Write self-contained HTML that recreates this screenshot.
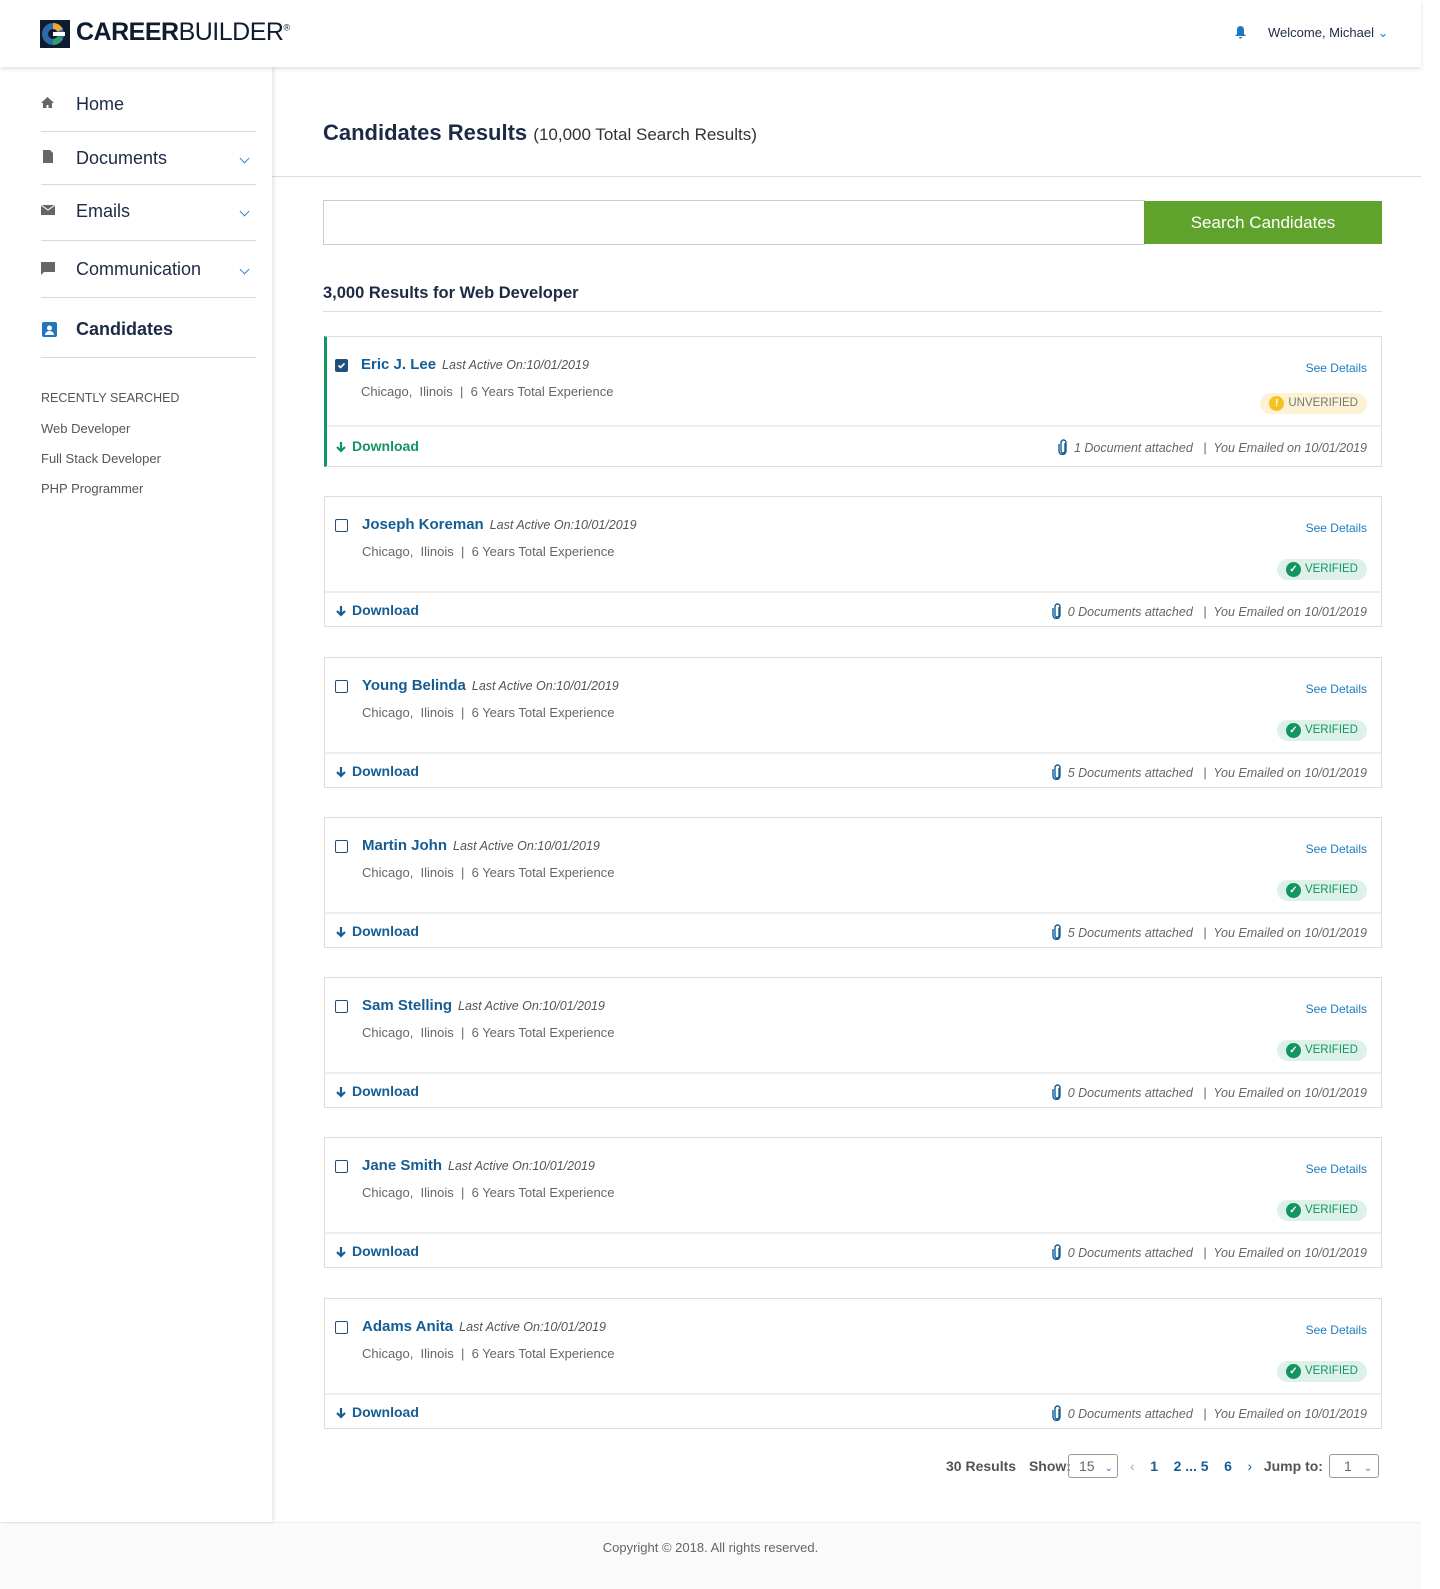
<!DOCTYPE html>
<html><head><meta charset="utf-8"><style>
*{box-sizing:border-box;margin:0;padding:0}
body{width:1440px;height:1589px;background:#fff;font-family:"Liberation Sans",sans-serif;color:#1d2a44;position:relative;overflow:hidden}
.hdr{position:absolute;left:0;top:0;width:1421px;height:67px;background:#fff;box-shadow:0 2px 4px rgba(0,0,0,.12);z-index:3}
.side{position:absolute;left:0;top:67px;width:272px;height:1455px;background:#fff;box-shadow:2px 0 4px rgba(0,0,0,.1);z-index:2}
.foot{position:absolute;left:0;top:1522px;width:1421px;height:67px;background:#fafafa;border-top:1px solid #eee;text-align:center;font-size:13px;color:#666;line-height:50px}
.nav{position:absolute;left:41px;width:215px;border-bottom:1px solid #d8d8d8;font-size:18px}
.nav span{position:absolute;left:35px}
.chev{position:absolute;right:8px;width:7px;height:7px;border-right:1.5px solid #3a86c8;border-bottom:1.5px solid #3a86c8;transform:rotate(45deg)}
.rs{position:absolute;left:41px;font-size:13px;color:#555}
.card{position:absolute;left:324px;width:1058px;height:131px;border:1px solid #ddd;background:#fff}
.card .bot{position:absolute;left:0;right:0;bottom:0;height:35px;border-top:2px solid #eee}
.cb{position:absolute;left:10px;top:22px;width:13px;height:13px;border:1.5px solid #1e4f7e;border-radius:2px}
.name{position:absolute;left:37px;top:19px;font-size:15px;font-weight:bold;color:#155d93}
.name i{font-weight:normal;font-size:12.5px;color:#555;margin-left:6px}
.loc{position:absolute;left:37px;top:47px;font-size:13px;color:#666}
.sd{position:absolute;right:14px;top:24px;font-size:12px;color:#1b7cc1}
.badge{position:absolute;right:14px;height:21px;border-radius:11px;font-size:11.5px;line-height:21px;padding:0 9px 0 28px}
.badge b{position:absolute;left:9px;top:3px;width:15px;height:15px;border-radius:50%;color:#fff;font-size:10px;line-height:15px;text-align:center}
.v{background:#ddf1ea;color:#13955f}.v b{background:#13955f}
.u{background:#fdf2d4;color:#777}.u b{background:#f3c321}
.dl{position:absolute;left:10px;top:9px;font-size:14px;color:#155d93;font-weight:bold}
.dl svg{vertical-align:-2px;margin-right:5px}
.meta{position:absolute;right:14px;top:10px;font-size:12.5px;color:#666;font-style:italic}
.meta svg{vertical-align:-3px;margin-right:6px}
</style></head><body>
<div class="hdr">
<svg style="position:absolute;left:40px;top:20px" width="30" height="28" viewBox="0 0 30 28"><rect x="0" y="0" width="30" height="28" fill="#0f1c30"/><circle cx="13" cy="14" r="11" fill="#2d6ba6"/><path d="M13 14 L13 3 A11 11 0 0 1 23 9Z" fill="#f0a43a"/><path d="M13 14 L23 19 A11 11 0 0 1 13 25Z" fill="#2ea06a"/><circle cx="13" cy="14" r="5" fill="#0f1c30"/><rect x="13" y="12" width="12" height="4" fill="#fff"/></svg>
<div style="position:absolute;left:76px;top:18px;font-size:25px;letter-spacing:-0.5px;color:#0f1c30"><b>CAREER</b><span style="font-weight:normal">BUILDER</span><sup style="font-size:9px">®</sup></div>
<svg style="position:absolute;left:1234px;top:25px" width="13" height="14" viewBox="0 0 13 14"><path d="M6.5 1C4 1 3 3 3 5v4L1 11h11l-2-2V5c0-2-1-4-3.5-4zM5 12h3a1.5 1.5 0 0 1-3 0z" fill="#2176c0"/></svg>
<div style="position:absolute;left:1268px;top:25px;font-size:13px;color:#1d2a44">Welcome, Michael <span style="color:#3a86c8">⌄</span></div>
</div>
<div class="side">
<div class="nav" style="top:0;height:65px;border-bottom:1px solid #d8d8d8"><svg style="position:absolute;left:0;top:30px" width="13" height="11"><path d="M6.5 0L0 6h2v5h3.5V8h2v3H11V6h2z" fill="#666"/></svg><span style="top:27px">Home</span></div>
<div class="nav" style="top:65px;height:53px"><svg style="position:absolute;left:2px;top:18px" width="10" height="13"><path d="M0 0h7l3 3v10H0z" fill="#666"/></svg><span style="top:16px">Documents</span><i class="chev" style="top:23px"></i></div>
<div class="nav" style="top:118px;height:56px"><svg style="position:absolute;left:0;top:20px" width="14" height="10"><rect width="14" height="10" fill="#666"/><path d="M0 0l7 5 7-5" stroke="#fff" fill="none"/></svg><span style="top:16px">Emails</span><i class="chev" style="top:23px"></i></div>
<div class="nav" style="top:174px;height:57px"><svg style="position:absolute;left:0;top:21px" width="14" height="13"><path d="M0 0h14v10H3l-3 3z" fill="#666"/></svg><span style="top:18px">Communication</span><i class="chev" style="top:25px"></i></div>
<div class="nav" style="top:231px;height:60px;font-weight:bold"><svg style="position:absolute;left:1px;top:23px" width="15" height="16"><rect y="1" width="15" height="15" rx="2" fill="#2176c0"/><circle cx="7.5" cy="7" r="2.5" fill="#fff"/><path d="M3 14a4.5 4 0 0 1 9 0z" fill="#fff"/></svg><span style="top:21px">Candidates</span></div>
<div class="rs" style="top:324px;font-size:12.5px">RECENTLY SEARCHED</div>
<div class="rs" style="top:354px">Web Developer</div>
<div class="rs" style="top:384px">Full Stack Developer</div>
<div class="rs" style="top:414px">PHP Programmer</div>
</div>
<div style="position:absolute;left:323px;top:120px;font-size:22px;font-weight:bold;color:#1d2a44">Candidates Results <span style="font-weight:normal;font-size:17px;color:#333">(10,000 Total Search Results)</span></div>
<div style="position:absolute;left:272px;top:176px;width:1149px;border-top:1px solid #ddd"></div>
<div style="position:absolute;left:323px;top:200px;width:822px;height:45px;border:1px solid #ccc"></div>
<div style="position:absolute;left:1144px;top:201px;width:238px;height:43px;background:#5fa32c;color:#fff;font-size:17px;text-align:center;line-height:43px">Search Candidates</div>
<div style="position:absolute;left:323px;top:284px;font-size:16.5px;font-weight:bold;color:#1d2a44">3,000 Results for Web Developer</div>
<div style="position:absolute;left:323px;top:311px;width:1059px;border-top:1px solid #ddd"></div>

<svg width="0" height="0" style="position:absolute"><defs>
<symbol id="ar" viewBox="0 0 12 12"><path d="M6 1v9M2 6l4 4 4-4" stroke="currentColor" stroke-width="2.2" fill="none"/></symbol>
<symbol id="pc" viewBox="0 0 10 16"><path d="M7 4v8a2 2 0 0 1-4 0V3.5a2.5 2.5 0 0 1 5 0V12a3.5 3.5 0 0 1-7 0V5" stroke="#155d93" stroke-width="1.4" fill="none"/></symbol>
</defs></svg>

<div class="card" style="top:336px;border-left:3px solid #13955f"><i class="cb" style="background:#1e4f7e;left:8px;"><svg style="position:absolute;left:1px;top:1px" width="9" height="9" viewBox="0 0 9 9"><path d="M1.5 4.5l2 2 4-4" stroke="#fff" stroke-width="1.6" fill="none"/></svg></i><div class="name" style="left:34px">Eric J. Lee<i>Last Active On:10/01/2019</i></div><div class="loc" style="left:34px">Chicago,&nbsp; Ilinois &nbsp;|&nbsp; 6 Years Total Experience</div><div class="sd">See Details</div><div class="badge u" style="top:56px"><b>!</b>UNVERIFIED</div><div class="bot" style="height:41px"><div class="dl" style="color:#13955f;left:8px;top:11px"><svg width="12" height="12" style="color:#13955f"><use href="#ar"/></svg>Download</div><div class="meta" style="top:12px"><svg width="10" height="16"><use href="#pc"/></svg>1 Document attached &nbsp; | &nbsp;You Emailed on 10/01/2019</div></div></div>

<div class="card" style="top:496px"><i class="cb"></i><div class="name">Joseph Koreman<i>Last Active On:10/01/2019</i></div><div class="loc">Chicago,&nbsp; Ilinois &nbsp;|&nbsp; 6 Years Total Experience</div><div class="sd">See Details</div><div class="badge v" style="top:62px"><b>✓</b>VERIFIED</div><div class="bot"><div class="dl"><svg width="12" height="12" style="color:#155d93"><use href="#ar"/></svg>Download</div><div class="meta"><svg width="10" height="16"><use href="#pc"/></svg>0 Documents attached &nbsp; | &nbsp;You Emailed on 10/01/2019</div></div></div>

<div class="card" style="top:657px"><i class="cb"></i><div class="name">Young Belinda<i>Last Active On:10/01/2019</i></div><div class="loc">Chicago,&nbsp; Ilinois &nbsp;|&nbsp; 6 Years Total Experience</div><div class="sd">See Details</div><div class="badge v" style="top:62px"><b>✓</b>VERIFIED</div><div class="bot"><div class="dl"><svg width="12" height="12" style="color:#155d93"><use href="#ar"/></svg>Download</div><div class="meta"><svg width="10" height="16"><use href="#pc"/></svg>5 Documents attached &nbsp; | &nbsp;You Emailed on 10/01/2019</div></div></div>

<div class="card" style="top:817px"><i class="cb"></i><div class="name">Martin John<i>Last Active On:10/01/2019</i></div><div class="loc">Chicago,&nbsp; Ilinois &nbsp;|&nbsp; 6 Years Total Experience</div><div class="sd">See Details</div><div class="badge v" style="top:62px"><b>✓</b>VERIFIED</div><div class="bot"><div class="dl"><svg width="12" height="12" style="color:#155d93"><use href="#ar"/></svg>Download</div><div class="meta"><svg width="10" height="16"><use href="#pc"/></svg>5 Documents attached &nbsp; | &nbsp;You Emailed on 10/01/2019</div></div></div>

<div class="card" style="top:977px"><i class="cb"></i><div class="name">Sam Stelling<i>Last Active On:10/01/2019</i></div><div class="loc">Chicago,&nbsp; Ilinois &nbsp;|&nbsp; 6 Years Total Experience</div><div class="sd">See Details</div><div class="badge v" style="top:62px"><b>✓</b>VERIFIED</div><div class="bot"><div class="dl"><svg width="12" height="12" style="color:#155d93"><use href="#ar"/></svg>Download</div><div class="meta"><svg width="10" height="16"><use href="#pc"/></svg>0 Documents attached &nbsp; | &nbsp;You Emailed on 10/01/2019</div></div></div>

<div class="card" style="top:1137px"><i class="cb"></i><div class="name">Jane Smith<i>Last Active On:10/01/2019</i></div><div class="loc">Chicago,&nbsp; Ilinois &nbsp;|&nbsp; 6 Years Total Experience</div><div class="sd">See Details</div><div class="badge v" style="top:62px"><b>✓</b>VERIFIED</div><div class="bot"><div class="dl"><svg width="12" height="12" style="color:#155d93"><use href="#ar"/></svg>Download</div><div class="meta"><svg width="10" height="16"><use href="#pc"/></svg>0 Documents attached &nbsp; | &nbsp;You Emailed on 10/01/2019</div></div></div>

<div class="card" style="top:1298px"><i class="cb"></i><div class="name">Adams Anita<i>Last Active On:10/01/2019</i></div><div class="loc">Chicago,&nbsp; Ilinois &nbsp;|&nbsp; 6 Years Total Experience</div><div class="sd">See Details</div><div class="badge v" style="top:62px"><b>✓</b>VERIFIED</div><div class="bot"><div class="dl"><svg width="12" height="12" style="color:#155d93"><use href="#ar"/></svg>Download</div><div class="meta"><svg width="10" height="16"><use href="#pc"/></svg>0 Documents attached &nbsp; | &nbsp;You Emailed on 10/01/2019</div></div></div>

<div style="position:absolute;left:946px;top:1458px;font-size:14px;color:#555;font-weight:bold;white-space:nowrap">30 Results <span style="margin-left:9px">Show:</span></div>
<div style="position:absolute;left:1068px;top:1454px;width:50px;height:24px;border:1px solid #999;border-radius:3px;font-size:14px;color:#666;padding:3px 0 0 10px">15 <span style="font-size:10px;color:#3a86c8;margin-left:6px">⌄</span></div>
<div style="position:absolute;left:1130px;top:1458px;font-size:14px;font-weight:bold;color:#155d93;white-space:nowrap"><span style="color:#aaa;font-weight:normal">‹</span>&nbsp;&nbsp;&nbsp;&nbsp;1&nbsp;&nbsp;&nbsp;&nbsp;2 ... 5&nbsp;&nbsp;&nbsp;&nbsp;6&nbsp;&nbsp;&nbsp;&nbsp;<span style="font-weight:normal">›</span>&nbsp;&nbsp;&nbsp;<span style="color:#555">Jump to:</span></div>
<div style="position:absolute;left:1329px;top:1454px;width:50px;height:24px;border:1px solid #999;border-radius:3px;font-size:14px;color:#666;padding:3px 0 0 14px">1 <span style="font-size:10px;color:#3a86c8;margin-left:8px">⌄</span></div>

<div class="foot">Copyright © 2018. All rights reserved.</div>
</body></html>
